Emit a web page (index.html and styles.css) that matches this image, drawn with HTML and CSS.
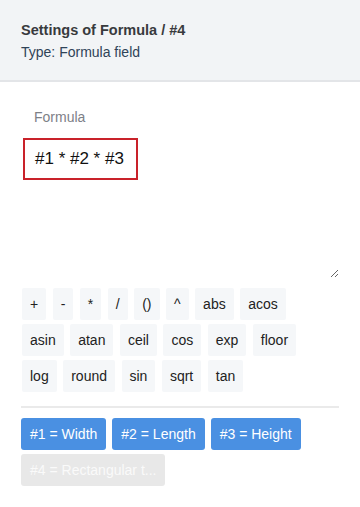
FILE: index.html
```html
<!DOCTYPE html>
<html>
  <head>
    <title>Formula Settings</title>
    <link rel="stylesheet" href="styles.css">
  </head>
  <body>
    <div class="header">
      <div class="title">Settings of Formula / #4</div>
      <div class="subtitle">Type: Formula field</div>
    </div>

    <div class="content">
      <div class="formula-editor">
        <div class="formula-label">Formula</div>
        <div class="formula-value">#1 * #2 * #3</div>
      </div>

      <div class="operators">
        <button class="op-btn">+</button>
        <button class="op-btn">-</button>
        <button class="op-btn">*</button>
        <button class="op-btn">/</button>
        <button class="op-btn">()</button>
        <button class="op-btn">^</button>
        <button class="op-btn">abs</button>
        <button class="op-btn">acos</button>
        <button class="op-btn">asin</button>
        <button class="op-btn">atan</button>
        <button class="op-btn">ceil</button>
        <button class="op-btn">cos</button>
        <button class="op-btn">exp</button>
        <button class="op-btn">floor</button>
        <button class="op-btn">log</button>
        <button class="op-btn">round</button>
        <button class="op-btn">sin</button>
        <button class="op-btn">sqrt</button>
        <button class="op-btn">tan</button>
      </div>

      <div class="divider"></div>

      <div class="variables">
        <button class="var-btn">#1 = Width</button>
        <button class="var-btn">#2 = Length</button>
        <button class="var-btn">#3 = Height</button>
        <button class="var-btn disabled">#4 = Rectangular t...</button>
      </div>
    </div>
  </body>
</html>
```

FILE: styles.css
```css
:root {
  --header-bg: #f2f4f6;
  --border-color: #e3e5e8;
  --text-color: #222;
  --op-bg: #f5f7f9;
  --var-bg: #4a90e2;
  --var-disabled: #e8e8e8;
}

body {
  font-family: "Liberation Sans", Arial, sans-serif;
  margin: 0;
  padding: 0;
  background-color: #fff;
  color: var(--text-color);
}

.header {
  background-color: var(--header-bg);
  border-bottom: 2px solid var(--border-color);
  padding: 20px 21px 18px;
  height: 42px;
}

.title {
  font-size: 14.5px;
  font-weight: bold;
  line-height: 20px;
  color: #383a3d;
}

.subtitle {
  font-size: 14px;
  line-height: 20px;
  margin-top: 2px;
  color: #2f4358;
}

.content {
  padding: 0 21px;
}

.formula-editor {
  box-sizing: border-box;
  height: 196px;
  overflow: auto;
  resize: vertical;
  padding-top: 25px;
}

.formula-label {
  font-size: 14px;
  line-height: 20px;
  color: #7d8087;
  margin-left: 13px;
}

.formula-value {
  display: inline-block;
  margin: 11px 0 0 2px;
  padding: 0 12px 0 10px;
  border: 2px solid #c9222a;
  font-size: 17px;
  line-height: 38px;
  color: #111;
}

.operators {
  display: flex;
  flex-wrap: wrap;
  gap: 4px 6.5px;
  width: 300px;
  margin-top: 10px;
  padding-left: 1px;
}

.op-btn {
  height: 32px;
  padding: 0 8px;
  border: none;
  border-radius: 2px;
  background-color: var(--op-bg);
  color: var(--text-color);
  font-family: inherit;
  font-size: 14px;
  cursor: pointer;
}

.op-btn:hover {
  background-color: #e9edf1;
}

.divider {
  height: 2px;
  background-color: #eaeaea;
  margin-top: 14px;
}

.variables {
  display: flex;
  flex-wrap: wrap;
  gap: 4px 6px;
  margin-top: 10px;
}

.var-btn {
  height: 32px;
  padding: 0 9px;
  border: none;
  border-radius: 3px;
  background-color: var(--var-bg);
  color: #fff;
  font-family: inherit;
  font-size: 14px;
  cursor: pointer;
}

.var-btn.disabled {
  background-color: var(--var-disabled);
  color: #fafafa;
  cursor: default;
}
```
